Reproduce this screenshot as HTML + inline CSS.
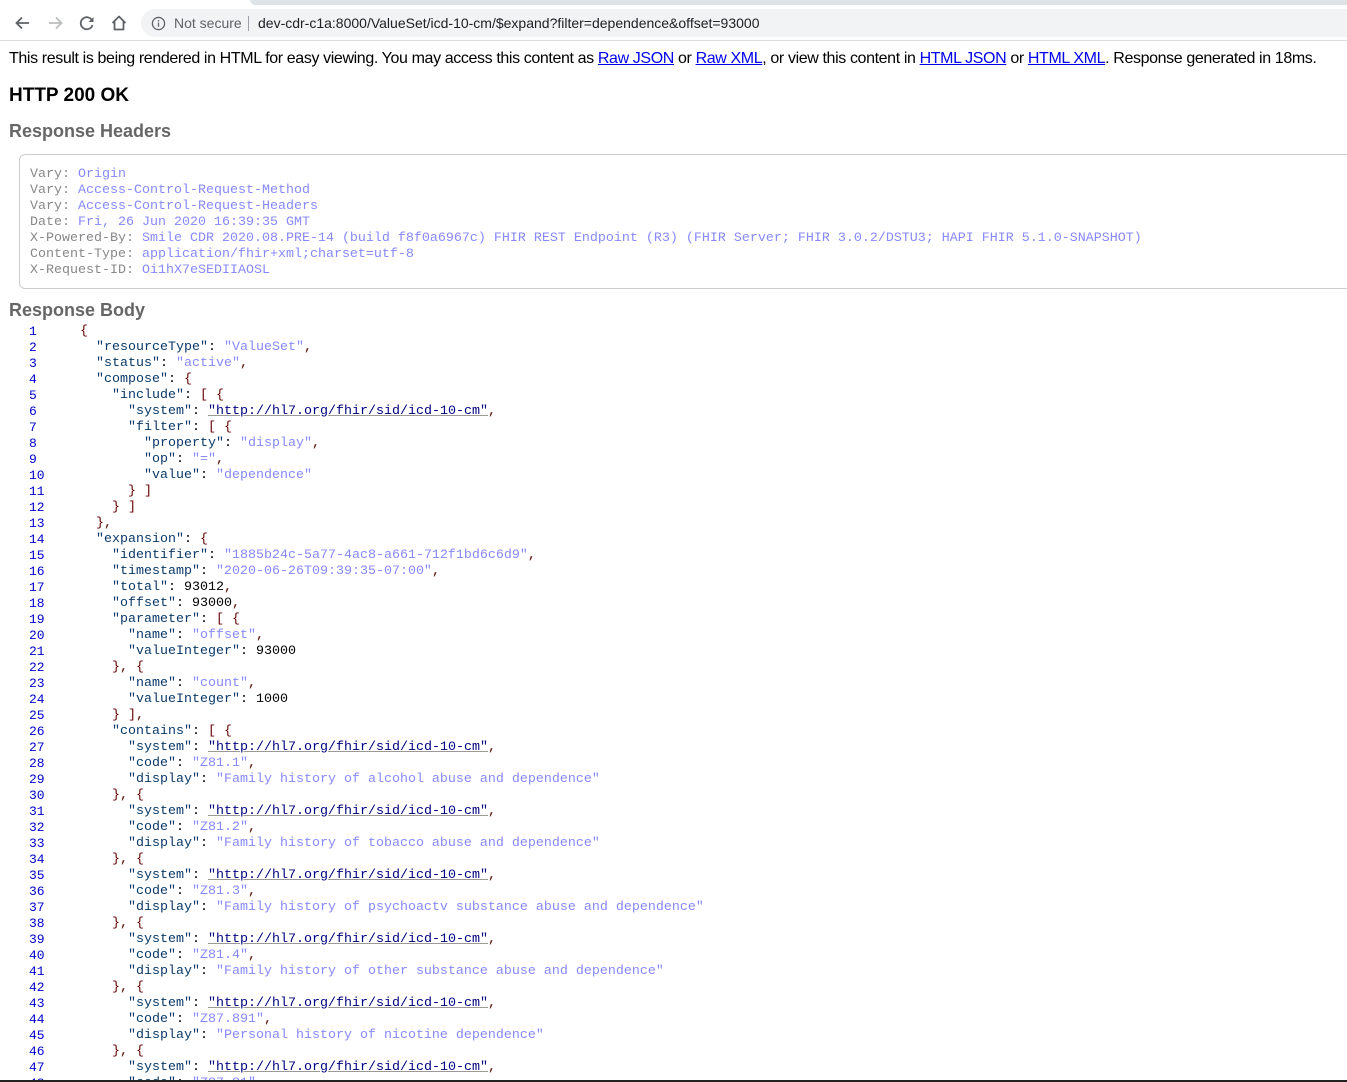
<!DOCTYPE html>
<html><head><meta charset="utf-8">
<style>
html,body{margin:0;padding:0;background:#fff;width:1347px;height:1082px;overflow:hidden;position:relative}
body{font-family:"Liberation Sans",Arial,sans-serif;}
.tabstrip{position:absolute;left:0;top:0;width:1347px;height:5px;background:#fff}
.tabstrip .t{position:absolute;left:250px;top:0;right:0;height:5px;background:#dee3e6;border-bottom-left-radius:6px}
.toolbar{position:absolute;left:0;top:5px;width:1347px;height:35px;background:#fff;border-bottom:1px solid #dadce0}
.omni{position:absolute;left:141px;top:4px;right:0;height:28px;background:#f1f3f4;border-radius:14px 0 0 14px;font-size:14px;color:#202124;line-height:28px}
.omni .ns{position:absolute;left:33px;color:#5f6368}
.omni .sep{position:absolute;left:107px;top:7px;width:1px;height:15px;background:#9aa0a6}
.omni .url{position:absolute;left:117px;color:#202124}
.icon{position:absolute;top:8px}
.intro{position:absolute;left:9px;top:50px;font-size:16px;color:#000;white-space:nowrap;letter-spacing:-0.38px}
.intro a{color:#00e;text-decoration:underline}
h1{position:absolute;left:9px;top:85px;margin:0;font-size:19px;font-weight:bold}
h2{position:absolute;left:9px;margin:0;font-size:18px;font-weight:bold;color:#666}
.hdr{position:absolute;left:19px;top:154px;width:1340px;height:133px;border:1px solid #ccc;border-radius:6px;background:#fff}
.mono{font-family:"Liberation Mono","Courier New",monospace;font-size:13.33px}
.hdr .l{position:absolute;left:10px;height:16px;line-height:16px;color:#888;white-space:pre}
.v{color:#88f}
.code{position:absolute;left:0;top:324px}
.row{height:16px;line-height:16px;position:relative}
.n{position:absolute;left:29px;color:#00c;font-family:"Liberation Mono",monospace;font-size:13px}
.c{position:absolute;left:80px;white-space:pre}
.k{color:#0a3a6a}
.s{color:#88f}
.p{color:#600}
.u{color:#000080;text-decoration:underline;text-decoration-color:#999}
.num{color:#000}
</style></head><body>
<div class="tabstrip"><div class="t"></div></div>
<div class="toolbar">
<svg class="icon" style="left:13px" width="20" height="20" viewBox="0 0 20 20"><path d="M16 10H4M9 4.5L3.5 10 9 15.5" fill="none" stroke="#5f6368" stroke-width="1.8"/></svg>
<svg class="icon" style="left:45px" width="20" height="20" viewBox="0 0 20 20"><path d="M4 10h12M11 4.5l5.5 5.5-5.5 5.5" fill="none" stroke="#babcbe" stroke-width="1.8"/></svg>
<svg class="icon" style="left:77px" width="20" height="20" viewBox="0 0 20 20"><path d="M15.5 8.5A6 6 0 1 0 15.5 12" fill="none" stroke="#5f6368" stroke-width="1.8"/><path d="M16.5 4v5h-5z" fill="#5f6368"/></svg>
<svg class="icon" style="left:109px" width="20" height="20" viewBox="0 0 20 20"><path d="M3.5 10L10 3.5 16.5 10M5.5 8.5V16.5h9V8.5" fill="none" stroke="#5f6368" stroke-width="1.8" stroke-linejoin="round"/></svg>
<div class="omni">
<svg style="position:absolute;left:10px;top:7px" width="15" height="15" viewBox="0 0 16 16"><circle cx="8" cy="8" r="6.5" fill="none" stroke="#5f6368" stroke-width="1.4"/><rect x="7.3" y="7" width="1.4" height="4.5" fill="#5f6368"/><rect x="7.3" y="4.3" width="1.4" height="1.5" fill="#5f6368"/></svg>
<span class="ns">Not secure</span><span class="sep"></span><span class="url">dev-cdr-c1a:8000/ValueSet/icd-10-cm/$expand?filter=dependence&amp;offset=93000</span>
</div>
</div>
<div class="intro">This result is being rendered in HTML for easy viewing. You may access this content as <a>Raw JSON</a> or <a>Raw XML</a>, or view this content in <a>HTML JSON</a> or <a>HTML XML</a>. Response generated in 18ms.</div>
<h1>HTTP 200 OK</h1>
<h2 style="top:121px">Response Headers</h2>
<div class="hdr mono">
<div class="l" style="top:12px">Vary: <span class="v">Origin</span></div>
<div class="l" style="top:28px">Vary: <span class="v">Access-Control-Request-Method</span></div>
<div class="l" style="top:44px">Vary: <span class="v">Access-Control-Request-Headers</span></div>
<div class="l" style="top:60px">Date: <span class="v">Fri, 26 Jun 2020 16:39:35 GMT</span></div>
<div class="l" style="top:76px">X-Powered-By: <span class="v">Smile CDR 2020.08.PRE-14 (build f8f0a6967c) FHIR REST Endpoint (R3) (FHIR Server; FHIR 3.0.2/DSTU3; HAPI FHIR 5.1.0-SNAPSHOT)</span></div>
<div class="l" style="top:92px">Content-Type: <span class="v">application/fhir+xml;charset=utf-8</span></div>
<div class="l" style="top:108px">X-Request-ID: <span class="v">Oi1hX7eSEDIIAOSL</span></div>
</div>
<h2 style="top:300px">Response Body</h2>
<div class="code mono">
<div class="row"><span class="n">1</span><span class="c"><span class="p">{</span></span></div>
<div class="row"><span class="n">2</span><span class="c">  <span class="k">"resourceType"</span>: <span class="s">"ValueSet"</span><span class="p">,</span></span></div>
<div class="row"><span class="n">3</span><span class="c">  <span class="k">"status"</span>: <span class="s">"active"</span><span class="p">,</span></span></div>
<div class="row"><span class="n">4</span><span class="c">  <span class="k">"compose"</span>: <span class="p">{</span></span></div>
<div class="row"><span class="n">5</span><span class="c">    <span class="k">"include"</span>: <span class="p">[ {</span></span></div>
<div class="row"><span class="n">6</span><span class="c">      <span class="k">"system"</span>: <span class="u">"http://hl7.org/fhir/sid/icd-10-cm"</span><span class="p">,</span></span></div>
<div class="row"><span class="n">7</span><span class="c">      <span class="k">"filter"</span>: <span class="p">[ {</span></span></div>
<div class="row"><span class="n">8</span><span class="c">        <span class="k">"property"</span>: <span class="s">"display"</span><span class="p">,</span></span></div>
<div class="row"><span class="n">9</span><span class="c">        <span class="k">"op"</span>: <span class="s">"="</span><span class="p">,</span></span></div>
<div class="row"><span class="n">10</span><span class="c">        <span class="k">"value"</span>: <span class="s">"dependence"</span></span></div>
<div class="row"><span class="n">11</span><span class="c">      <span class="p">} ]</span></span></div>
<div class="row"><span class="n">12</span><span class="c">    <span class="p">} ]</span></span></div>
<div class="row"><span class="n">13</span><span class="c">  <span class="p">},</span></span></div>
<div class="row"><span class="n">14</span><span class="c">  <span class="k">"expansion"</span>: <span class="p">{</span></span></div>
<div class="row"><span class="n">15</span><span class="c">    <span class="k">"identifier"</span>: <span class="s">"1885b24c-5a77-4ac8-a661-712f1bd6c6d9"</span><span class="p">,</span></span></div>
<div class="row"><span class="n">16</span><span class="c">    <span class="k">"timestamp"</span>: <span class="s">"2020-06-26T09:39:35-07:00"</span><span class="p">,</span></span></div>
<div class="row"><span class="n">17</span><span class="c">    <span class="k">"total"</span>: <span class="num">93012</span><span class="p">,</span></span></div>
<div class="row"><span class="n">18</span><span class="c">    <span class="k">"offset"</span>: <span class="num">93000</span><span class="p">,</span></span></div>
<div class="row"><span class="n">19</span><span class="c">    <span class="k">"parameter"</span>: <span class="p">[ {</span></span></div>
<div class="row"><span class="n">20</span><span class="c">      <span class="k">"name"</span>: <span class="s">"offset"</span><span class="p">,</span></span></div>
<div class="row"><span class="n">21</span><span class="c">      <span class="k">"valueInteger"</span>: <span class="num">93000</span></span></div>
<div class="row"><span class="n">22</span><span class="c">    <span class="p">}, {</span></span></div>
<div class="row"><span class="n">23</span><span class="c">      <span class="k">"name"</span>: <span class="s">"count"</span><span class="p">,</span></span></div>
<div class="row"><span class="n">24</span><span class="c">      <span class="k">"valueInteger"</span>: <span class="num">1000</span></span></div>
<div class="row"><span class="n">25</span><span class="c">    <span class="p">} ],</span></span></div>
<div class="row"><span class="n">26</span><span class="c">    <span class="k">"contains"</span>: <span class="p">[ {</span></span></div>
<div class="row"><span class="n">27</span><span class="c">      <span class="k">"system"</span>: <span class="u">"http://hl7.org/fhir/sid/icd-10-cm"</span><span class="p">,</span></span></div>
<div class="row"><span class="n">28</span><span class="c">      <span class="k">"code"</span>: <span class="s">"Z81.1"</span><span class="p">,</span></span></div>
<div class="row"><span class="n">29</span><span class="c">      <span class="k">"display"</span>: <span class="s">"Family history of alcohol abuse and dependence"</span></span></div>
<div class="row"><span class="n">30</span><span class="c">    <span class="p">}, {</span></span></div>
<div class="row"><span class="n">31</span><span class="c">      <span class="k">"system"</span>: <span class="u">"http://hl7.org/fhir/sid/icd-10-cm"</span><span class="p">,</span></span></div>
<div class="row"><span class="n">32</span><span class="c">      <span class="k">"code"</span>: <span class="s">"Z81.2"</span><span class="p">,</span></span></div>
<div class="row"><span class="n">33</span><span class="c">      <span class="k">"display"</span>: <span class="s">"Family history of tobacco abuse and dependence"</span></span></div>
<div class="row"><span class="n">34</span><span class="c">    <span class="p">}, {</span></span></div>
<div class="row"><span class="n">35</span><span class="c">      <span class="k">"system"</span>: <span class="u">"http://hl7.org/fhir/sid/icd-10-cm"</span><span class="p">,</span></span></div>
<div class="row"><span class="n">36</span><span class="c">      <span class="k">"code"</span>: <span class="s">"Z81.3"</span><span class="p">,</span></span></div>
<div class="row"><span class="n">37</span><span class="c">      <span class="k">"display"</span>: <span class="s">"Family history of psychoactv substance abuse and dependence"</span></span></div>
<div class="row"><span class="n">38</span><span class="c">    <span class="p">}, {</span></span></div>
<div class="row"><span class="n">39</span><span class="c">      <span class="k">"system"</span>: <span class="u">"http://hl7.org/fhir/sid/icd-10-cm"</span><span class="p">,</span></span></div>
<div class="row"><span class="n">40</span><span class="c">      <span class="k">"code"</span>: <span class="s">"Z81.4"</span><span class="p">,</span></span></div>
<div class="row"><span class="n">41</span><span class="c">      <span class="k">"display"</span>: <span class="s">"Family history of other substance abuse and dependence"</span></span></div>
<div class="row"><span class="n">42</span><span class="c">    <span class="p">}, {</span></span></div>
<div class="row"><span class="n">43</span><span class="c">      <span class="k">"system"</span>: <span class="u">"http://hl7.org/fhir/sid/icd-10-cm"</span><span class="p">,</span></span></div>
<div class="row"><span class="n">44</span><span class="c">      <span class="k">"code"</span>: <span class="s">"Z87.891"</span><span class="p">,</span></span></div>
<div class="row"><span class="n">45</span><span class="c">      <span class="k">"display"</span>: <span class="s">"Personal history of nicotine dependence"</span></span></div>
<div class="row"><span class="n">46</span><span class="c">    <span class="p">}, {</span></span></div>
<div class="row"><span class="n">47</span><span class="c">      <span class="k">"system"</span>: <span class="u">"http://hl7.org/fhir/sid/icd-10-cm"</span><span class="p">,</span></span></div>
<div class="row"><span class="n">48</span><span class="c">      <span class="k">"code"</span>: <span class="s">"Z87.81"</span><span class="p">,</span></span></div>
</div>
<div style="position:absolute;left:0;top:1080px;width:1347px;height:2px;background:#222"></div>
</body></html>
